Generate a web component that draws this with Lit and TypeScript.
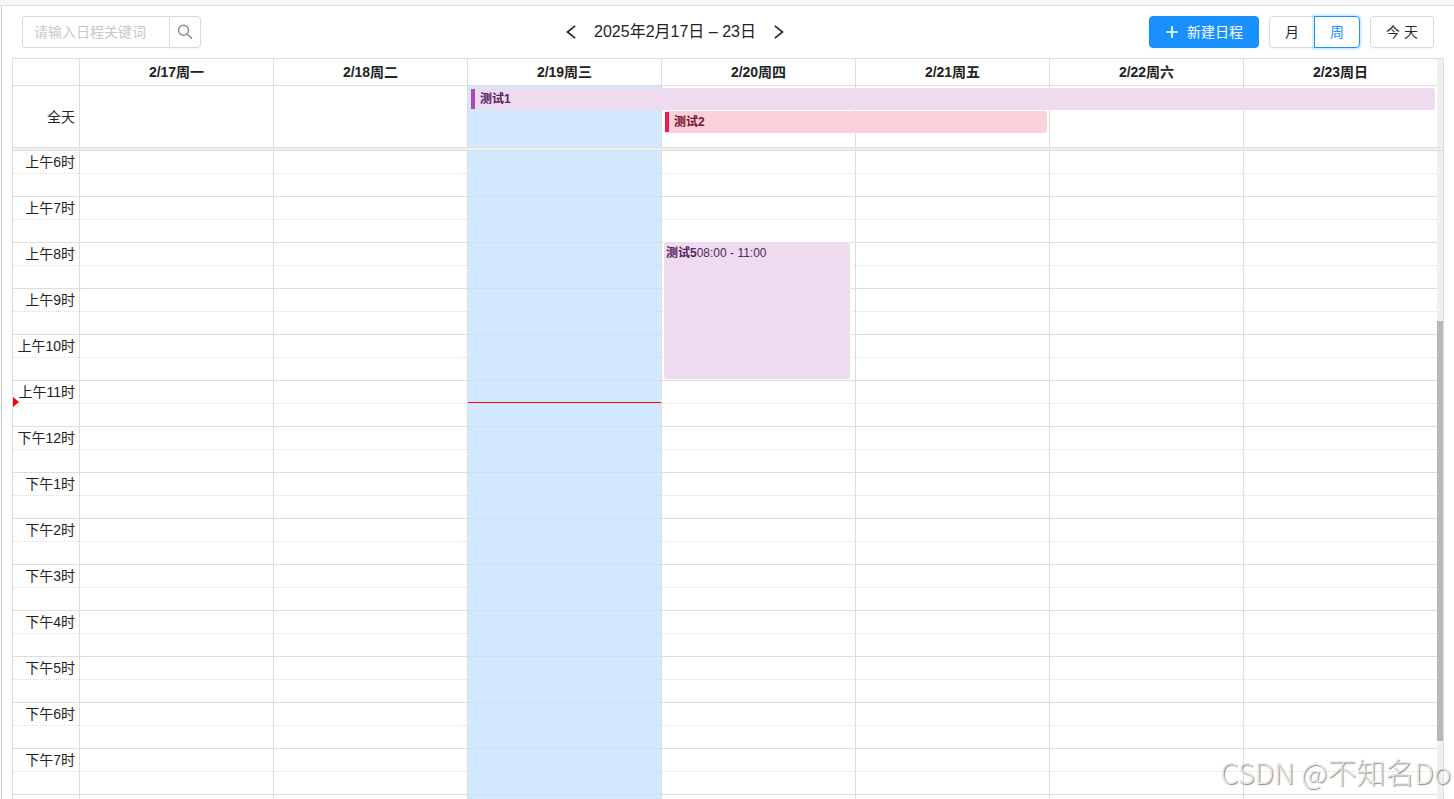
import { LitElement, html, css } from "lit";
import { customElement, state } from "lit/decorators.js";
import { classMap } from "lit/directives/class-map.js";
import { styleMap } from "lit/directives/style-map.js";

interface AllDayEvent {
  title: string;
  from: number;
  to: number;
  tone: string;
}

interface TimedEvent {
  title: string;
  time: string;
  day: number;
  start: number;
  end: number;
}

const HOUR = 46;
const FIRST_HOUR = 6;
const TODAY = 2;
const NOW = 11.5;

const DAYS = ["2/17周一", "2/18周二", "2/19周三", "2/20周四", "2/21周五", "2/22周六", "2/23周日"];
const HOURS = Array.from({ length: 14 }, (_, i) => i + FIRST_HOUR);
const ALL_DAY: AllDayEvent[] = [
  { title: "测试1", from: 2, to: 6, tone: "purple" },
  { title: "测试2", from: 3, to: 4, tone: "red" },
];
const TIMED: TimedEvent[] = [
  { title: "测试5", time: "08:00 - 11:00", day: 3, start: 8, end: 11 },
];

const hourLabel = (h: number) => (h < 12 ? `上午${h}时` : `下午${h === 12 ? 12 : h - 12}时`);
const offset = (h: number) => Math.round((h - FIRST_HOUR) * HOUR) - 1;

@customElement("schedule-toolbar")
export class ScheduleToolbar extends LitElement {
  @state() private view = "week";

  static styles = css`
    :host {
      display: block;
    }
    .bar {
      display: flex;
      align-items: center;
      justify-content: space-between;
      padding: 10px;
    }
    .search {
      display: flex;
    }
    input,
    button {
      box-sizing: border-box;
      height: 32px;
      margin: 0;
      border: 1px solid #d9d9d9;
      background: #fff;
      color: #262626;
      font: 14px/20px "Liberation Sans", "Noto Sans CJK SC", sans-serif;
      outline: none;
    }
    button {
      display: flex;
      align-items: center;
      justify-content: center;
      border-radius: 4px;
      box-shadow: 0 2px 0 rgba(0, 0, 0, 0.02);
      cursor: pointer;
    }
    input {
      width: 148px;
      padding: 0 11px;
      border-radius: 4px 0 0 4px;
    }
    input::placeholder {
      color: #c8c8c8;
    }
    .find {
      width: 32px;
      margin-left: -1px;
      padding: 0;
      border-radius: 0 4px 4px 0;
      color: #8c8c8c;
    }
    .period {
      display: flex;
      align-items: center;
      gap: 12px;
    }
    h1 {
      margin: 0;
      color: #222;
      font: 16px/24px "Liberation Sans", "Noto Sans CJK SC", sans-serif;
    }
    .step {
      width: 22px;
      padding: 0;
      border: 0;
      box-shadow: none;
    }
    .actions {
      display: flex;
      justify-content: flex-end;
      gap: 10px;
    }
    .create {
      gap: 8px;
      padding: 0 15px;
      border-color: #1890ff;
      background: #1890ff;
      color: #fff;
    }
    .views {
      display: flex;
    }
    .view {
      width: 46px;
      padding: 0;
    }
    .view:first-child {
      border-radius: 4px 0 0 4px;
    }
    .view:last-child {
      margin-left: -1px;
      border-radius: 0 4px 4px 0;
    }
    .view.active {
      z-index: 1;
      border-color: #1890ff;
      color: #1890ff;
      box-shadow: 0 0 0 2px rgba(24, 144, 255, 0.16);
    }
    .today {
      width: 64px;
      padding: 0;
    }
    svg {
      display: block;
      fill: none;
      stroke: currentColor;
    }
  `;

  private viewButton(id: string, text: string) {
    const active = this.view === id;
    return html`<button
      class=${classMap({ view: true, active })}
      aria-pressed=${active}
      @click=${() => (this.view = id)}
    >${text}</button>`;
  }

  render() {
    return html`
      <header class="bar">
        <form class="search" @submit=${(e: Event) => e.preventDefault()}>
          <input type="text" aria-label="日程关键词" placeholder="请输入日程关键词" />
          <button class="find" aria-label="搜索">
            <svg width="16" height="16" viewBox="0 0 16 16" stroke-width="1.4">
              <circle cx="6.5" cy="6.3" r="5" />
              <path d="M10.2 10L15 14.8" stroke-width="1.6" />
            </svg>
          </button>
        </form>
        <div class="period">
          <button class="step" aria-label="上一周">
            <svg width="12" height="16" viewBox="0 0 12 16" stroke-width="1.6">
              <path d="M10.2 1.8L2.4 8L10.2 14.2" />
            </svg>
          </button>
          <h1>2025年2月17日 – 23日</h1>
          <button class="step" aria-label="下一周">
            <svg width="12" height="16" viewBox="0 0 12 16" stroke-width="1.6">
              <path d="M1.8 1.8L9.6 8L1.8 14.2" />
            </svg>
          </button>
        </div>
        <div class="actions">
          <button class="create">
            <svg width="14" height="14" viewBox="0 0 14 14" stroke-width="1.7">
              <path d="M7 1V13M1 7H13" />
            </svg>
            <span>新建日程</span>
          </button>
          <div class="views">${this.viewButton("month", "月")}${this.viewButton("week", "周")}</div>
          <button class="today">今 天</button>
        </div>
      </header>
    `;
  }
}

@customElement("week-grid")
export class WeekGrid extends LitElement {
  static styles = css`
    :host {
      display: flex;
      flex-direction: column;
      min-height: 0;
      border: 1px solid #ddd;
      border-bottom: 0;
      color: #222;
      font: 14px/22px "Liberation Sans", "Noto Sans CJK SC", sans-serif;
    }
    .frame {
      display: grid;
      grid-template-columns: minmax(0, 1fr) 6px;
    }
    .gutter {
      background: #f0f0f0;
    }
    .row {
      display: grid;
      grid-template-columns: 66px repeat(7, minmax(0, 1fr));
    }
    .heads {
      border-bottom: 1px solid #ddd;
    }
    .head {
      border-left: 1px solid #ddd;
      font-weight: 700;
      line-height: 26px;
      text-align: center;
    }
    .stack {
      display: grid;
    }
    .layer {
      grid-area: 1 / 1;
    }
    .allday {
      min-height: 61px;
    }
    .label {
      display: flex;
      align-items: center;
      justify-content: flex-end;
      padding-right: 4px;
    }
    .day {
      border-left: 1px solid #ddd;
    }
    .day.today {
      background: #d1e8ff;
    }
    .bars {
      grid-auto-rows: 22px;
      align-content: start;
      row-gap: 1px;
      padding-top: 2px;
    }
    .bar {
      display: flex;
      align-items: center;
      gap: 5px;
      margin: 0 2px 0 4px;
      border-radius: 3px;
      font-size: 12px;
      font-weight: 700;
    }
    .bar::before {
      content: "";
      width: 4px;
      height: 20px;
      background: var(--mark);
    }
    .purple {
      --mark: #ab47bc;
      background: #eedbf0;
      color: #56235e;
    }
    .red {
      --mark: #e91e50;
      background: #fbd2da;
      color: #7a1030;
    }
    .divider {
      flex: none;
      height: 2px;
      border: solid #ddd;
      border-width: 1px 0;
      background: #f0f0f0;
    }
    .body {
      flex: 1;
      min-height: 0;
      overflow: hidden;
    }
    .slot {
      height: 22px;
      border-bottom: 1px dotted #ddd;
    }
    .slot.end {
      border-bottom-style: solid;
    }
    .axis,
    .column {
      display: grid;
      align-content: start;
    }
    .column {
      margin-left: 1px;
    }
    .event {
      box-sizing: border-box;
      grid-area: 1 / 1;
      margin: 0 5px 0 2px;
      padding: 0 2px;
      border-radius: 3px;
      box-shadow: 0 0 0 1px #fff;
      font-size: 12px;
    }
    .event b {
      font-weight: 700;
    }
    .now {
      grid-area: 1 / 1;
      height: 1px;
      background: #f00;
    }
    .arrow {
      justify-self: start;
      border: solid transparent;
      border-width: 5px 0 5px 6px;
      border-left-color: #f00;
    }
    .thumb {
      background: #b8b8b8;
    }
  `;

  private days() {
    return html`<div class="row layer">
      <div></div>
      ${DAYS.map((_, i) => html`<div class=${classMap({ day: true, today: i === TODAY })}></div>`)}
    </div>`;
  }

  private column(day: number) {
    return html`<div class="column">
      ${TIMED.filter((e) => e.day === day).map(
        (e) => html`<div
          class="event purple"
          style=${styleMap({
            marginTop: `${offset(e.start)}px`,
            height: `${(e.end - e.start) * HOUR - 1}px`,
          })}
        ><b>${e.title}</b>${e.time}</div>`
      )}
      ${day === TODAY
        ? html`<div class="now" style=${styleMap({ marginTop: `${offset(NOW) - 1}px` })}></div>`
        : null}
    </div>`;
  }

  render() {
    return html`
      <div class="frame">
        <div>
          <div class="row heads">
            <div></div>
            ${DAYS.map((d) => html`<div class="head">${d}</div>`)}
          </div>
          <div class="stack allday">
            ${this.days()}
            <div class="row layer"><div class="label">全天</div></div>
            <div class="row layer bars">
              ${ALL_DAY.map(
                (e, i) => html`<div
                  class="bar ${e.tone}"
                  style=${styleMap({ gridColumn: `${e.from + 2} / ${e.to + 3}`, gridRow: `${i + 1}` })}
                >${e.title}</div>`
              )}
            </div>
          </div>
        </div>
        <div class="gutter"></div>
      </div>
      <div class="divider"></div>
      <div class="frame body">
        <div class="stack">
          ${this.days()}
          <div class="layer">
            ${HOURS.map(
              (h) => html`<div class="slot row"><div class="label">${hourLabel(h)}</div></div>
                <div class="slot end"></div>`
            )}
          </div>
          <div class="row layer">
            <div class="axis">
              <div class="arrow" style=${styleMap({ marginTop: `${offset(NOW) - 6}px` })}></div>
            </div>
            ${DAYS.map((_, i) => this.column(i))}
          </div>
        </div>
        <div class="gutter">
          <div class="thumb" style=${styleMap({ marginTop: "170px", height: "420px" })}></div>
        </div>
      </div>
    `;
  }
}

@customElement("app-root")
export class AppRoot extends LitElement {
  static styles = css`
    :host {
      display: block;
    }
    .page {
      position: relative;
      display: flex;
      flex-direction: column;
      height: 100vh;
      overflow: hidden;
      background: #fff;
    }
    .strip {
      flex: none;
      height: 5px;
      border-bottom: 1px solid #ddd;
      background: #f7f7f7;
    }
    .panel {
      display: flex;
      flex: 1;
      flex-direction: column;
      min-height: 0;
      margin-left: 1px;
      padding: 0 10px;
      border-left: 1px solid #ccc;
    }
    week-grid {
      flex: 1;
    }
    .watermark {
      position: absolute;
      right: 3px;
      bottom: 8px;
      color: rgba(236, 236, 236, 0.9);
      font: 300 29px/40px "Noto Sans CJK SC", sans-serif;
      text-shadow: 1px 1px 1px rgba(110, 110, 110, 0.8);
      pointer-events: none;
    }
  `;

  render() {
    return html`
      <main class="page">
        <div class="strip"></div>
        <section class="panel">
          <schedule-toolbar></schedule-toolbar>
          <week-grid></week-grid>
        </section>
        <div class="watermark">CSDN @不知名Do</div>
      </main>
    `;
  }
}
